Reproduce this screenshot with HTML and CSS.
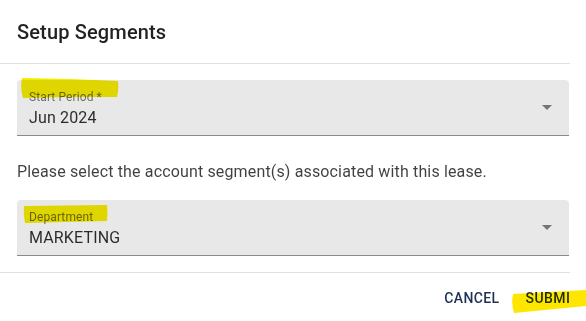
FILE: index.html
```html
<!DOCTYPE html>
<html>
<head>
<meta charset="utf-8">
<link rel="stylesheet" href="styles.css">
</head>
<body>
<div class="dialog">
  <div class="dialog-title">Setup Segments</div>
  <div class="dialog-content">
    <div class="field">
      <div class="field-label">Start Period *</div>
      <div class="field-value">Jun 2024</div>
      <svg class="arrow" width="10" height="5" viewBox="0 0 10 5"><path d="M0 0 L5 5 L10 0 Z" fill="#757575"/></svg>
    </div>
    <p class="help">Please select the account segment(s) associated with this lease.</p>
    <div class="field">
      <div class="field-label">Department</div>
      <div class="field-value">MARKETING</div>
      <svg class="arrow" width="10" height="5" viewBox="0 0 10 5"><path d="M0 0 L5 5 L10 0 Z" fill="#757575"/></svg>
    </div>
  </div>
  <div class="dialog-actions">
    <button class="btn">CANCEL</button>
    <button class="btn">SUBMIT</button>
  </div>
</div>
<svg class="marks" width="586" height="321" viewBox="0 0 586 321">
  <path d="M22 78 L70 79 L118 81 Q119 89 117 97 L70 97 L23 98 Q20 88 22 78 Z" fill="#f5eb00"/>
  <path d="M24 206 L107 205 Q108 213 107 221 L25 223 Q23 214 24 206 Z" fill="#f5eb00"/>
  <path d="M513 294 L586 290 L586 306 L514 313 Q511 303 513 294 Z" fill="#ffe600"/>
</svg>
</body>
</html>
```

FILE: styles.css
```css
html, body {
  margin: 0;
  padding: 0;
  background: #ffffff;
}
body {
  width: 586px;
  height: 321px;
  overflow: hidden;
  position: relative;
  font-family: Roboto, "Liberation Sans", Arial, sans-serif;
}
.dialog {
  width: 570px;
  overflow: hidden;
  background: #fff;
}
.dialog-title {
  height: 64px;
  box-sizing: border-box;
  padding: 0 17px;
  display: flex;
  align-items: center;
  font-size: 20px;
  font-weight: 500;
  letter-spacing: 0.15px;
  color: rgba(0, 0, 0, 0.87);
  border-bottom: 1px solid #e0e0e0;
}
.dialog-content {
  padding: 16px 0 16px 17px;
  border-bottom: 1px solid #e0e0e0;
}
.field {
  position: relative;
  height: 56px;
  box-sizing: border-box;
  width: 552px;
  background: #e8e8e8;
  border-radius: 4px 4px 0 0;
  border-bottom: 1px solid #8a8a8a;
  padding: 9px 12px 0 12px;
  display: flex;
  flex-direction: column;
}
.field-label {
  font-size: 12px;
  line-height: 16px;
  color: rgba(0, 0, 0, 0.55);
  letter-spacing: 0.1px;
}
.field-value {
  font-size: 16px;
  line-height: 24px;
  margin-top: 1px;
  color: rgba(0, 0, 0, 0.82);
  letter-spacing: 0.15px;
}
.arrow {
  position: absolute;
  right: 17px;
  top: 25px;
}
.help {
  margin: 24px 0 16px 0;
  font-size: 16px;
  line-height: 24px;
  letter-spacing: 0.15px;
  color: rgba(0, 0, 0, 0.75);
}
.dialog-actions {
  height: 48px;
  box-sizing: border-box;
  padding-top: 2px;
  margin-right: -25px;
  padding-right: 8px;
  display: flex;
  align-items: center;
  justify-content: flex-end;
  gap: 10px;
}
.btn {
  background: none;
  border: none;
  padding: 6px 8px;
  font-family: Roboto, "Liberation Sans", Arial, sans-serif;
  font-size: 14px;
  font-weight: 500;
  letter-spacing: 0.4px;
  line-height: 24px;
  color: #1d3057;
}
.marks {
  position: absolute;
  left: 0;
  top: 0;
  pointer-events: none;
  mix-blend-mode: multiply;
}
```
